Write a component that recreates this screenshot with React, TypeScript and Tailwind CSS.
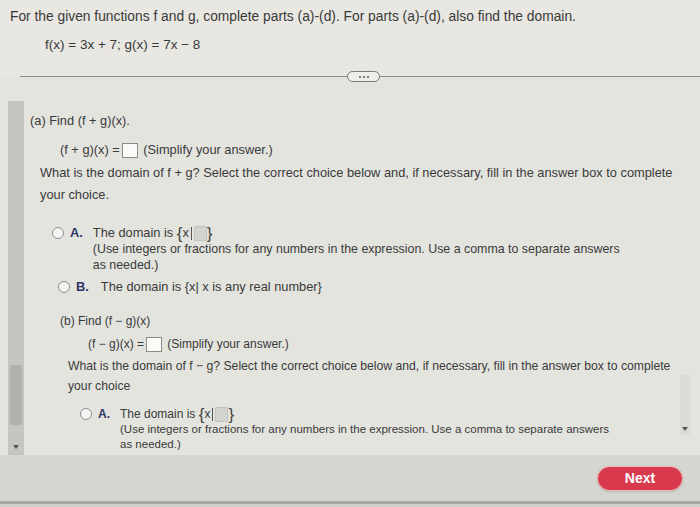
import React from "react";

const Radio = () => (
  <span className="inline-block w-[12px] h-[12px] rounded-full border-[1.5px] border-[#8d8f96] bg-[#f4f4f2] shrink-0" />
);

const AnswerBox = () => (
  <span className="inline-block align-middle w-[16px] h-[15px] border border-[#8b8b88] bg-[#fbfbf9] mx-[2px]" />
);

const SetBox = () => (
  <span className="inline-flex items-center align-middle">
    <span className="text-[17px] leading-none text-[#444]">{"{"}</span>
    <span>x</span>
    <span className="inline-block w-px h-[13px] bg-[#555] mx-[2px]" />
    <span className="inline-block w-[13px] h-[15px] bg-[#d2d2cf] border border-[#c2c2bf] rounded-[1px]" />
    <span className="text-[17px] leading-none text-[#444]">{"}"}</span>
  </span>
);

const DomainChoice = ({ left, small }: { left: string; small?: boolean }) => (
  <div className={`flex items-start ${left}`}>
    <div className="flex items-center gap-[6px] h-[16px]">
      <Radio />
      <span className="font-bold text-[#2f3566]">A.</span>
    </div>
    <div className="ml-[10px]">
      <div className="h-[16px] flex items-center">
        The domain is&nbsp;<SetBox />
      </div>
      <div className={small ? "leading-[15px] text-[11.5px]" : "leading-[16px] text-[12.4px]"}>
        (Use integers or fractions for any numbers in the expression. Use a comma to separate answers
      </div>
      <div className={small ? "leading-[15px] text-[11.5px]" : "leading-[16px] text-[12.4px]"}>as needed.)</div>
    </div>
  </div>
);

export default function App() {
  return (
    <div className="w-[700px] h-[507px] bg-[#e8e7e2] font-['Liberation_Sans',Arial,sans-serif] text-[12.8px] text-[#3a3a3a] flex flex-col overflow-hidden">
      {/* header */}
      <div className="pt-[9px] pl-[10px] h-[76px]">
        <div className="text-[13.8px] leading-[16px]">
          For the given functions f and g, complete parts (a)-(d). For parts (a)-(d), also find the domain.
        </div>
        <div className="mt-[12px] pl-[35px] text-[13.5px] leading-[16px]">
          f(x) = 3x + 7; g(x) = 7x − 8
        </div>
      </div>

      {/* divider */}
      <div className="relative h-px bg-[#8e8e89] ml-[20px]">
        <div className="absolute left-[327px] -top-[5px] w-[33px] h-[11px] rounded-full border border-[#7a7a76] bg-[#eeeeea] flex items-center justify-center gap-[2px]">
          <span className="w-[2px] h-[2px] rounded-full bg-[#555]" />
          <span className="w-[2px] h-[2px] rounded-full bg-[#555]" />
          <span className="w-[2px] h-[2px] rounded-full bg-[#555]" />
        </div>
      </div>

      {/* scroll area */}
      <div className="flex-1 flex bg-[#e4e4df]">
        <div className="w-[26px] flex pl-[8px] pt-[24px]">
          <div className="w-[16px] bg-[#c6c6c1] flex flex-col justify-end items-center pb-[6px]">
            <div className="w-[12px] h-[60px] bg-[#b2b2ad] mb-[20px]" />
            <span className="w-0 h-0 border-l-[3px] border-r-[3px] border-t-[4px] border-l-transparent border-r-transparent border-t-[#555]" />
          </div>
        </div>

        <div className="flex-1 flex flex-col">
          <div className="mt-[36px] pl-[4px] leading-[16px]">(a) Find (f + g)(x).</div>
          <div className="mt-[13px] pl-[34px] h-[16px] flex items-center">
            (f + g)(x) =<AnswerBox />&nbsp;(Simplify your answer.)
          </div>
          <div className="mt-[4px] pl-[14px] leading-[22px]">
            What is the domain of f + g? Select the correct choice below and, if necessary, fill in the answer box to complete
            <br />
            your choice.
          </div>
          <div className="mt-[19px]">
            <DomainChoice left="pl-[26px]" />
          </div>
          <div className="mt-[6px] pl-[32px] flex items-center gap-[6px] h-[16px]">
            <Radio />
            <span className="font-bold text-[#2f3566]">B.</span>
            <span className="ml-[6px]">The domain is {"{"}x| x is any real number{"}"}</span>
          </div>
          <div className="mt-[18px] pl-[34px] leading-[16px] text-[12px]">(b) Find (f − g)(x)</div>
          <div className="mt-[7px] pl-[62px] h-[16px] flex items-center text-[12px]">
            (f − g)(x) =<AnswerBox />&nbsp;(Simplify your answer.)
          </div>
          <div className="mt-[4px] pl-[42px] leading-[20px] text-[12.2px]">
            What is the domain of f − g? Select the correct choice below and, if necessary, fill in the answer box to complete
            <br />
            your choice
          </div>
          <div className="mt-[10px] text-[12px]">
            <DomainChoice left="pl-[54px]" small />
          </div>
        </div>

        <div className="w-[14px] flex flex-col justify-end items-center pb-[20px] mr-[8px]">
          <div className="w-[10px] h-[60px] bg-[#dcdcd8] flex items-end justify-center pb-[4px]">
            <span className="w-0 h-0 border-l-[3px] border-r-[3px] border-t-[4px] border-l-transparent border-r-transparent border-t-[#555]" />
          </div>
        </div>
      </div>

      {/* footer */}
      <div className="h-[46px] bg-[#d6d6d1] flex items-center justify-end pr-[17px]">
        <button className="w-[86px] h-[25px] rounded-full bg-[#d8394d] border border-[#f0b7bd] text-white font-bold text-[14px] shadow-sm">
          Next
        </button>
      </div>
      <div className="h-[3px] bg-[#a8a8a3]" />
      <div className="h-[3px] bg-[#cfcfca]" />
    </div>
  );
}
